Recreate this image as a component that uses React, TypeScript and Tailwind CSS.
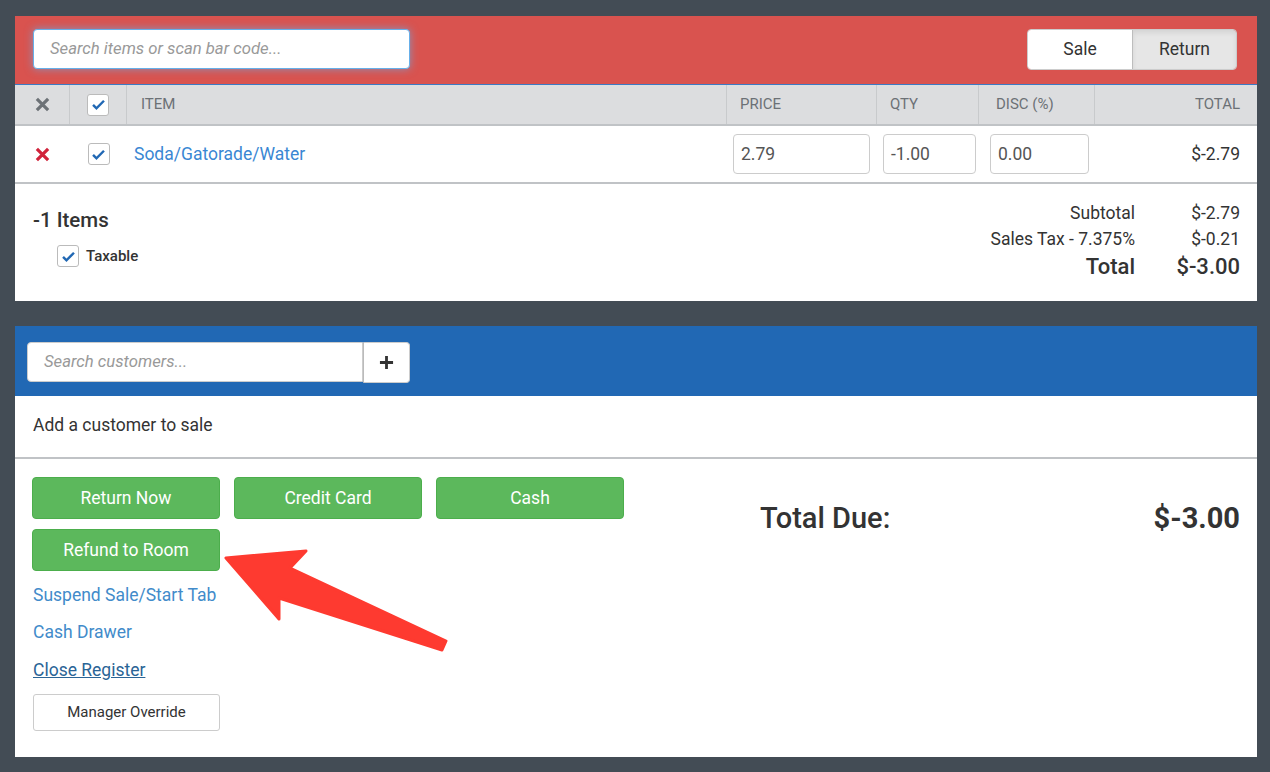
import React from "react";

const Check = () => (
  <svg viewBox="0 0 22 22" className="w-[15px] h-[15px]">
    <path d="M3 11.5l5 5L19 5.5" fill="none" stroke="#2168b4" strokeWidth="3.6" strokeLinecap="butt" strokeLinejoin="miter" />
  </svg>
);

const Box = ({ cls = "" }: { cls?: string }) => (
  <div className={`w-[22px] h-[22px] bg-white border border-[#bbbbbb] rounded-[3px] flex items-center justify-center ${cls}`}>
    <Check />
  </div>
);

const XIcon = ({ color }: { color: string }) => (
  <svg viewBox="0 0 16 16" className="w-[15px] h-[15px]">
    <path d="M2 2L14 14M14 2L2 14" stroke={color} strokeWidth="3.4" strokeLinecap="butt" />
  </svg>
);

export default function App() {
  return (
    <div className="relative w-[1270px] h-[772px] bg-[#434c55] pt-4 pl-[15px] font-['Roboto',_sans-serif] text-[#333333] overflow-hidden">
      {/* Panel 1 */}
      <div className="w-[1242px] bg-white">
        <div className="h-[69px] bg-[#d9534f] border-b border-[#3b7ac4] flex items-start justify-between pt-[13px] pl-[18px] pr-[20px]">
          <div className="w-[377px] h-[40px] bg-white border border-[#66afe9] rounded-[4px] shadow-[0_0_8px_rgba(102,175,233,0.7)] flex items-center px-[16px]">
            <span className="italic text-[16.7px] text-[#999999]">Search items or scan bar code...</span>
          </div>
          <div className="flex h-[41px] rounded-[4px] overflow-hidden border border-[#cccccc]">
            <div className="w-[104px] bg-white flex items-center justify-center text-[17.5px] text-[#333]">Sale</div>
            <div className="w-[104px] bg-[#e6e6e6] border-l border-[#bdbdbd] flex items-center justify-center text-[17.5px] text-[#333] shadow-[inset_0_3px_5px_rgba(0,0,0,0.08)]">Return</div>
          </div>
        </div>
        {/* header row */}
        <div className="h-[41px] bg-[#dcdddf] border-b-2 border-[#c0c3c6] grid grid-cols-[55px_57px_600px_150px_102px_116px_1fr] text-[15px] text-[#6c7176] uppercase">
          <div className="flex items-center justify-center border-r border-[#c8cacc]"><XIcon color="#6c7176" /></div>
          <div className="flex items-center justify-center border-r border-[#c8cacc]"><Box /></div>
          <div className="flex items-center pl-[14px] border-r border-[#c8cacc]">Item</div>
          <div className="flex items-center pl-[13px] border-r border-[#c8cacc]">Price</div>
          <div className="flex items-center pl-[13px] border-r border-[#c8cacc]">Qty</div>
          <div className="flex items-center pl-[17px] border-r border-[#c8cacc]">Disc (%)</div>
          <div className="flex items-center justify-end pr-[17px]">Total</div>
        </div>
        {/* item row */}
        <div className="h-[58px] border-b-2 border-[#c0c3c6] grid grid-cols-[55px_57px_600px_150px_102px_116px_1fr] text-[17.5px]">
          <div className="flex items-center justify-center"><XIcon color="#d0233b" /></div>
          <div className="flex items-center justify-center"><Box /></div>
          <div className="flex items-center pl-[7px] text-[#3a87d3]">Soda/Gatorade/Water</div>
          <div className="flex items-center pl-[6px] pr-[7px]">
            <div className="w-full h-[40px] border border-[#cccccc] rounded-[4px] flex items-center px-[7px] text-[#555]">2.79</div>
          </div>
          <div className="flex items-center pl-[6px] pr-[3px]">
            <div className="w-full h-[40px] border border-[#cccccc] rounded-[4px] flex items-center px-[7px] text-[#555]">-1.00</div>
          </div>
          <div className="flex items-center pl-[11px] pr-[6px]">
            <div className="w-full h-[40px] border border-[#cccccc] rounded-[4px] flex items-center px-[7px] text-[#555]">0.00</div>
          </div>
          <div className="flex items-center justify-end pr-[17px] text-[#333]">$-2.79</div>
        </div>
        {/* summary */}
        <div className="h-[117px] flex justify-between pl-[18px] pr-[17px]">
          <div className="pt-[24px]">
            <div className="text-[20.5px] font-medium leading-[25px] text-[#333]">-1 Items</div>
            <div className="flex items-center gap-[7px] mt-[12px] ml-[24px]">
              <Box />
              <span className="text-[15px] font-medium text-[#333]">Taxable</span>
            </div>
          </div>
          <div className="pt-[17px] text-[#333]">
            <div className="flex items-center h-[25px] text-[17.5px]">
              <span className="w-[200px] text-right">Subtotal</span>
              <span className="w-[105px] text-right">$-2.79</span>
            </div>
            <div className="flex items-center h-[26px] text-[17.5px]">
              <span className="w-[200px] text-right">Sales Tax - 7.375%</span>
              <span className="w-[105px] text-right">$-0.21</span>
            </div>
            <div className="flex items-center h-[29px] text-[22px] font-medium">
              <span className="w-[200px] text-right">Total</span>
              <span className="w-[105px] text-right">$-3.00</span>
            </div>
          </div>
        </div>
      </div>

      {/* Panel 2 */}
      <div className="w-[1242px] bg-white mt-[25px]">
        <div className="h-[70px] bg-[#2168b4] pt-[16px] pl-[12px] flex items-start">
          <div className="w-[336px] h-[40px] bg-white border border-[#cccccc] rounded-l-[4px] flex items-center px-[16px]">
            <span className="italic text-[16.7px] text-[#999999]">Search customers...</span>
          </div>
          <div className="w-[47px] h-[41px] bg-white border border-[#cccccc] border-l-[#bbbbbb] rounded-r-[4px] flex items-center justify-center">
            <svg viewBox="0 0 16 16" className="w-[15px] h-[15px]">
              <path d="M8 1V15M1 8H15" stroke="#333" strokeWidth="3" />
            </svg>
          </div>
        </div>
        <div className="h-[63px] border-b-2 border-[#c0c3c6] flex items-center pl-[18px] pb-[3px] text-[17.5px] text-[#333]">
          Add a customer to sale
        </div>
        <div className="h-[298px] flex">
          <div className="pl-[17px] pt-[18px] w-[640px]">
            <div className="grid grid-cols-[188px_188px_188px] gap-x-[14px] gap-y-[10px]">
              <div className="h-[42px] bg-[#5cb85c] border border-[#4cae4c] rounded-[4px] flex items-center justify-center text-white text-[17.5px]">Return Now</div>
              <div className="h-[42px] bg-[#5cb85c] border border-[#4cae4c] rounded-[4px] flex items-center justify-center text-white text-[17.5px]">Credit Card</div>
              <div className="h-[42px] bg-[#5cb85c] border border-[#4cae4c] rounded-[4px] flex items-center justify-center text-white text-[17.5px]">Cash</div>
              <div className="h-[42px] bg-[#5cb85c] border border-[#4cae4c] rounded-[4px] flex items-center justify-center text-white text-[17.5px]">Refund to Room</div>
            </div>
            <div className="mt-[13px] text-[17.5px] leading-[22px] text-[#428bca] ml-[1px]">Suspend Sale/Start Tab</div>
            <div className="mt-[15px] text-[17.5px] leading-[22px] text-[#428bca] ml-[1px]">Cash Drawer</div>
            <div className="mt-[16px] text-[17.5px] leading-[22px] text-[#2a6496] underline ml-[1px]">Close Register</div>
            <div className="mt-[13px] ml-[1px] w-[187px] h-[37px] border border-[#cccccc] rounded-[3px] flex items-center justify-center text-[15px] text-[#333]">Manager Override</div>
          </div>
          <div className="flex-1 flex items-start justify-between pt-[41px] pl-[105px] pr-[17px]">
            <span className="text-[29px] font-medium leading-[36px] text-[#333]">Total Due:</span>
            <span className="text-[29px] font-bold leading-[36px] text-[#333]">$-3.00</span>
          </div>
        </div>
      </div>

      {/* annotation arrow */}
      <svg className="absolute left-0 top-0 pointer-events-none" width="1270" height="772" viewBox="0 0 1270 772">
        <polygon
          points="226,558 306,551 290,568 446,641 442,650 279,598 279,619"
          fill="#fe3a30"
          stroke="#fe3a30"
          strokeWidth="3"
          strokeLinejoin="round"
        />
      </svg>
    </div>
  );
}
